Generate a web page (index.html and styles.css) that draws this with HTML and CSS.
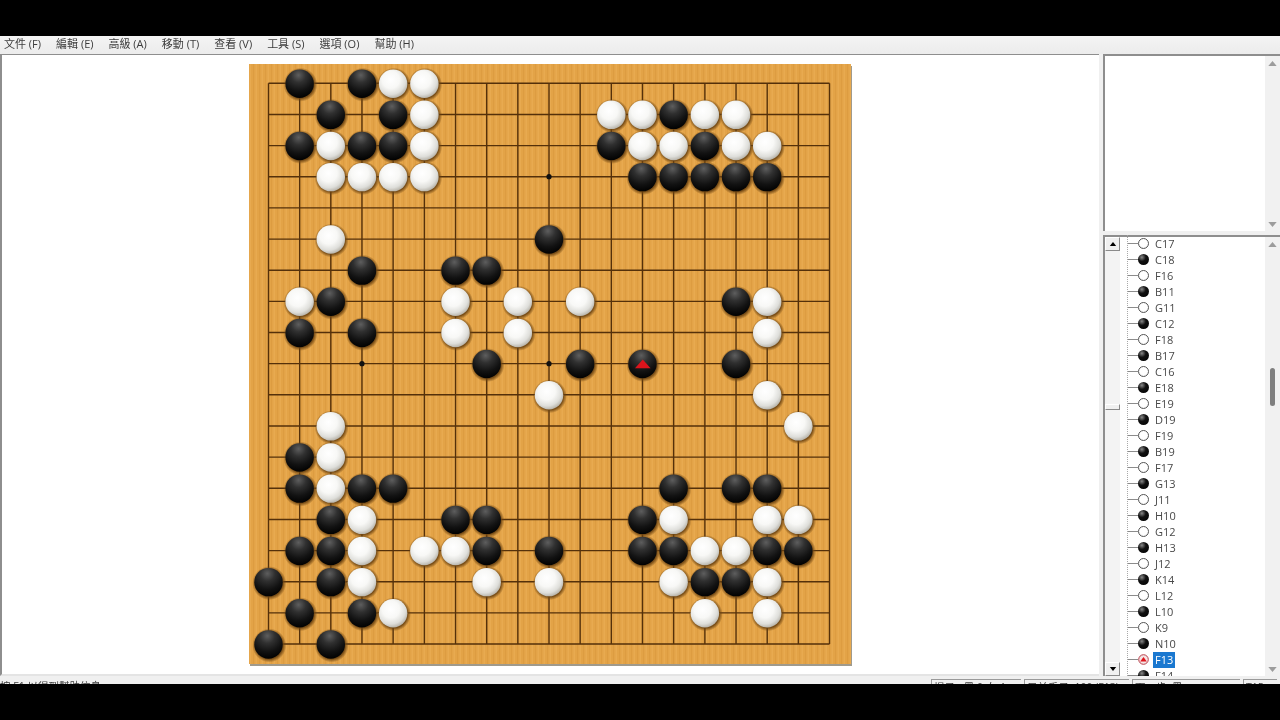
FILE: index.html
```html
<!DOCTYPE html>
<html lang="zh-Hant">
<head>
<meta charset="utf-8">
<title>圍棋</title>
<link rel="stylesheet" href="styles.css">
</head>
<body>
<div class="letterbox"></div>
<div class="window">
  <nav class="menubar">
    <span>文件 (F)</span><span>編輯 (E)</span><span>高級 (A)</span><span>移動 (T)</span><span>查看 (V)</span><span>工具 (S)</span><span>選項 (O)</span><span>幫助 (H)</span>
  </nav>
  <div class="main">
    <section class="boardpane">
      <svg class="board" viewBox="249 64 602 600" width="602" height="600">
        <defs>
          <pattern id="wood" width="6" height="10" patternUnits="userSpaceOnUse">
            <rect width="6" height="10" fill="#e3a347"/>
            <rect x="1" width="1" height="10" fill="#dd9c41"/>
            <rect x="3.5" width="1.5" height="10" fill="#e8aa50"/>
          </pattern>
          <radialGradient id="bk" cx="0.46" cy="0.2" r="0.82">
            <stop offset="0" stop-color="#5e5e5e"/>
            <stop offset="0.32" stop-color="#303030"/>
            <stop offset="0.68" stop-color="#121212"/>
            <stop offset="1" stop-color="#000"/>
          </radialGradient>
          <radialGradient id="wh" cx="0.42" cy="0.36" r="0.72">
            <stop offset="0" stop-color="#fff"/>
            <stop offset="0.42" stop-color="#f8f8f6"/>
            <stop offset="0.72" stop-color="#dededa"/>
            <stop offset="0.92" stop-color="#b4b0a6"/>
            <stop offset="1" stop-color="#8f8a7e"/>
          </radialGradient>
          <radialGradient id="halo">
            <stop offset="0.8" stop-color="#6e4512" stop-opacity=".9"/>
            <stop offset="1" stop-color="#6e4512" stop-opacity="0"/>
          </radialGradient>
          <g id="b"><circle cx="0.8" cy="1.4" r="17" fill="url(#halo)"/><circle cy="0.4" r="14.2" fill="url(#bk)"/></g>
          <g id="w"><circle cx="0.8" cy="1.4" r="17" fill="url(#halo)"/><circle cy="0.4" r="14.2" fill="url(#wh)"/></g>
        </defs>
        <rect x="249" y="64" width="602" height="600" fill="url(#wood)"/>
        <g transform="matrix(1.0018 0 0 1.00129 -0.984 0.193)">
        <path class="grid" d="M269 83V643M300.1 83V643M331.2 83V643M362.3 83V643M393.4 83V643M424.6 83V643M455.7 83V643M486.8 83V643M517.9 83V643M549 83V643M580.1 83V643M611.2 83V643M642.3 83V643M673.4 83V643M704.6 83V643M735.7 83V643M766.8 83V643M797.9 83V643M829 83V643M269 83H829M269 114.1H829M269 145.2H829M269 176.3H829M269 207.4H829M269 238.6H829M269 269.7H829M269 300.8H829M269 331.9H829M269 363H829M269 394.1H829M269 425.2H829M269 456.3H829M269 487.4H829M269 518.6H829M269 549.7H829M269 580.8H829M269 611.9H829M269 643H829"/>
        <circle cx="549" cy="176.3" r="2.6" fill="#111"/><circle cx="362.3" cy="363" r="2.6" fill="#111"/><circle cx="549" cy="363" r="2.6" fill="#111"/>
        <!-- row 0 -->
        <use href="#b" x="300.1" y="83"/><use href="#b" x="362.3" y="83"/><use href="#w" x="393.4" y="83"/><use href="#w" x="424.6" y="83"/>
        <!-- row 1 -->
        <use href="#b" x="331.2" y="114.1"/><use href="#b" x="393.4" y="114.1"/><use href="#w" x="424.6" y="114.1"/><use href="#w" x="611.2" y="114.1"/><use href="#w" x="642.3" y="114.1"/><use href="#b" x="673.4" y="114.1"/><use href="#w" x="704.6" y="114.1"/><use href="#w" x="735.7" y="114.1"/>
        <!-- row 2 -->
        <use href="#b" x="300.1" y="145.2"/><use href="#w" x="331.2" y="145.2"/><use href="#b" x="362.3" y="145.2"/><use href="#b" x="393.4" y="145.2"/><use href="#w" x="424.6" y="145.2"/><use href="#b" x="611.2" y="145.2"/><use href="#w" x="642.3" y="145.2"/><use href="#w" x="673.4" y="145.2"/><use href="#b" x="704.6" y="145.2"/><use href="#w" x="735.7" y="145.2"/><use href="#w" x="766.8" y="145.2"/>
        <!-- row 3 -->
        <use href="#w" x="331.2" y="176.3"/><use href="#w" x="362.3" y="176.3"/><use href="#w" x="393.4" y="176.3"/><use href="#w" x="424.6" y="176.3"/><use href="#b" x="642.3" y="176.3"/><use href="#b" x="673.4" y="176.3"/><use href="#b" x="704.6" y="176.3"/><use href="#b" x="735.7" y="176.3"/><use href="#b" x="766.8" y="176.3"/>
        <!-- row 5 -->
        <use href="#w" x="331.2" y="238.6"/><use href="#b" x="549" y="238.6"/>
        <!-- row 6 -->
        <use href="#b" x="362.3" y="269.7"/><use href="#b" x="455.7" y="269.7"/><use href="#b" x="486.8" y="269.7"/>
        <!-- row 7 -->
        <use href="#w" x="300.1" y="300.8"/><use href="#b" x="331.2" y="300.8"/><use href="#w" x="455.7" y="300.8"/><use href="#w" x="517.9" y="300.8"/><use href="#w" x="580.1" y="300.8"/><use href="#b" x="735.7" y="300.8"/><use href="#w" x="766.8" y="300.8"/>
        <!-- row 8 -->
        <use href="#b" x="300.1" y="331.9"/><use href="#b" x="362.3" y="331.9"/><use href="#w" x="455.7" y="331.9"/><use href="#w" x="517.9" y="331.9"/><use href="#w" x="766.8" y="331.9"/>
        <!-- row 9 -->
        <use href="#b" x="486.8" y="363"/><use href="#b" x="580.1" y="363"/><use href="#b" x="642.3" y="363"/><use href="#b" x="735.7" y="363"/>
        <polygon points="634.8,367.6 642.6,358.8 650.4,367.6" fill="#dc141c"/>
        <!-- row 10-11 -->
        <use href="#w" x="549" y="394.1"/><use href="#w" x="766.8" y="394.1"/><use href="#w" x="331.2" y="425.2"/><use href="#w" x="797.9" y="425.2"/>
        <!-- row 12 -->
        <use href="#b" x="300.1" y="456.3"/><use href="#w" x="331.2" y="456.3"/>
        <!-- row 13 -->
        <use href="#b" x="300.1" y="487.4"/><use href="#w" x="331.2" y="487.4"/><use href="#b" x="362.3" y="487.4"/><use href="#b" x="393.4" y="487.4"/><use href="#b" x="673.4" y="487.4"/><use href="#b" x="735.7" y="487.4"/><use href="#b" x="766.8" y="487.4"/>
        <!-- row 14 -->
        <use href="#b" x="331.2" y="518.6"/><use href="#w" x="362.3" y="518.6"/><use href="#b" x="455.7" y="518.6"/><use href="#b" x="486.8" y="518.6"/><use href="#b" x="642.3" y="518.6"/><use href="#w" x="673.4" y="518.6"/><use href="#w" x="766.8" y="518.6"/><use href="#w" x="797.9" y="518.6"/>
        <!-- row 15 -->
        <use href="#b" x="300.1" y="549.7"/><use href="#b" x="331.2" y="549.7"/><use href="#w" x="362.3" y="549.7"/><use href="#w" x="424.6" y="549.7"/><use href="#w" x="455.7" y="549.7"/><use href="#b" x="486.8" y="549.7"/><use href="#b" x="549" y="549.7"/><use href="#b" x="642.3" y="549.7"/><use href="#b" x="673.4" y="549.7"/><use href="#w" x="704.6" y="549.7"/><use href="#w" x="735.7" y="549.7"/><use href="#b" x="766.8" y="549.7"/><use href="#b" x="797.9" y="549.7"/>
        <!-- row 16 -->
        <use href="#b" x="269" y="580.8"/><use href="#b" x="331.2" y="580.8"/><use href="#w" x="362.3" y="580.8"/><use href="#w" x="486.8" y="580.8"/><use href="#w" x="549" y="580.8"/><use href="#w" x="673.4" y="580.8"/><use href="#b" x="704.6" y="580.8"/><use href="#b" x="735.7" y="580.8"/><use href="#w" x="766.8" y="580.8"/>
        <!-- row 17 -->
        <use href="#b" x="300.1" y="611.9"/><use href="#b" x="362.3" y="611.9"/><use href="#w" x="393.4" y="611.9"/><use href="#w" x="704.6" y="611.9"/><use href="#w" x="766.8" y="611.9"/>
        <!-- row 18 -->
        <use href="#b" x="269" y="643"/><use href="#b" x="331.2" y="643"/>
        </g>
      </svg>
    </section>
    <aside class="side">
      <div class="comment">
        <div class="comment-body"></div>
        <div class="vscroll">
          <svg class="arrow" viewBox="0 0 10 6"><path d="M0 6L5 0L10 6Z"/></svg>
          <svg class="arrow" viewBox="0 0 10 6"><path d="M0 0L10 0L5 6Z"/></svg>
        </div>
      </div>
      <div class="moves">
        <div class="slider">
          <button class="slider-btn"><svg class="tri" viewBox="0 0 8 5"><path d="M0 5L4 0L8 5Z"/></svg></button>
          <div class="slider-track"><div class="slider-thumb"></div></div>
          <button class="slider-btn"><svg class="tri" viewBox="0 0 8 5"><path d="M0 0L8 0L4 5Z"/></svg></button>
        </div>
        <ul class="tree">
          <li class="node"><i class="stone white"></i><span>C17</span></li>
          <li class="node"><i class="stone black"></i><span>C18</span></li>
          <li class="node"><i class="stone white"></i><span>F16</span></li>
          <li class="node"><i class="stone black"></i><span>B11</span></li>
          <li class="node"><i class="stone white"></i><span>G11</span></li>
          <li class="node"><i class="stone black"></i><span>C12</span></li>
          <li class="node"><i class="stone white"></i><span>F18</span></li>
          <li class="node"><i class="stone black"></i><span>B17</span></li>
          <li class="node"><i class="stone white"></i><span>C16</span></li>
          <li class="node"><i class="stone black"></i><span>E18</span></li>
          <li class="node"><i class="stone white"></i><span>E19</span></li>
          <li class="node"><i class="stone black"></i><span>D19</span></li>
          <li class="node"><i class="stone white"></i><span>F19</span></li>
          <li class="node"><i class="stone black"></i><span>B19</span></li>
          <li class="node"><i class="stone white"></i><span>F17</span></li>
          <li class="node"><i class="stone black"></i><span>G13</span></li>
          <li class="node"><i class="stone white"></i><span>J11</span></li>
          <li class="node"><i class="stone black"></i><span>H10</span></li>
          <li class="node"><i class="stone white"></i><span>G12</span></li>
          <li class="node"><i class="stone black"></i><span>H13</span></li>
          <li class="node"><i class="stone white"></i><span>J12</span></li>
          <li class="node"><i class="stone black"></i><span>K14</span></li>
          <li class="node"><i class="stone white"></i><span>L12</span></li>
          <li class="node"><i class="stone black"></i><span>L10</span></li>
          <li class="node"><i class="stone white"></i><span>K9</span></li>
          <li class="node"><i class="stone black"></i><span>N10</span></li>
          <li class="node"><svg class="stone-icon" viewBox="0 0 11 11"><circle cx="5.5" cy="5.5" r="4.8" fill="#f4e4e4" stroke="#b8404c"/><path d="M2.2 7.4L5.5 3L8.8 7.4Z" fill="#e0141c"/></svg><span class="selected">F13</span></li>
          <li class="node"><i class="stone black"></i><span>F14</span></li>
        </ul>
        <div class="vscroll">
          <svg class="arrow" viewBox="0 0 10 6"><path d="M0 6L5 0L10 6Z"/></svg>
          <div class="vthumb"></div>
          <svg class="arrow" viewBox="0 0 10 6"><path d="M0 0L10 0L5 6Z"/></svg>
        </div>
      </div>
    </aside>
  </div>
  <footer class="status">
    <div class="status-msg">按 F1 以得到幫助信息</div>
    <div class="status-cell cell-a">提子 - 黑 0 白 4</div>
    <div class="status-cell cell-b">目前手子: 100 (F13)</div>
    <div class="status-cell cell-c">下一步: 黑</div>
    <div class="status-cell cell-d">T15</div>
  </footer>
</div>
<div class="letterbox"></div>
</body>
</html>
```

FILE: styles.css
```css
* { box-sizing: border-box; }
html, body { margin: 0; height: 720px; overflow: hidden; background: #000; }
body {
  display: flex;
  flex-direction: column;
  font-family: "Open Sans", "Noto Sans CJK TC", sans-serif;
  font-size: 11px;
  color: #3c3c3c;
}
.letterbox { height: 36px; flex: none; background: #000; }
.window {
  height: 648px;
  flex: none;
  background: #f0f0f0;
  display: flex;
  flex-direction: column;
  overflow: hidden;
  filter: blur(0.45px);
}
.menubar {
  height: 18px;
  flex: none;
  display: flex;
  gap: 15px;
  padding: 0 0 2px 4px;
  align-items: center;
  line-height: 16px;
  white-space: nowrap;
  background: linear-gradient(#f4f4f4, #ececec);
}
.main { height: 622px; flex: none; display: flex; gap: 4px; }
.boardpane {
  width: 1099px;
  flex: none;
  background: #fff;
  border-top: 1px solid #8e8e8e;
  border-left: 2px solid #8e8e8e;
  border-bottom: 2px solid #e4e4e4;
  padding: 9px 0 0 247px;
}
.board { display: block; box-shadow: 1px 2px 0 #a09a8c; }
.grid { fill: none; stroke: #54300a; stroke-width: 1.4; }
.side { flex: 1; display: flex; flex-direction: column; gap: 4px; min-width: 0; }
.comment {
  height: 177px;
  flex: none;
  display: flex;
  background: #fff;
  border-top: 2px solid #8e8e8e;
  border-left: 2px solid #8e8e8e;
}
.comment-body { flex: 1; }
.vscroll {
  width: 15px;
  flex: none;
  background: #f1f1f1;
  display: flex;
  flex-direction: column;
  align-items: center;
  justify-content: space-between;
  padding: 5px 0 4px;
  position: relative;
}
.arrow { width: 9px; height: 5px; fill: #9c9c9c; display: block; }
.vthumb {
  position: absolute;
  left: 5px;
  top: 131px;
  width: 5px;
  height: 38px;
  border-radius: 3px;
  background: #7f7f7f;
}
.moves {
  flex: 1;
  min-height: 0;
  display: flex;
  background: #fff;
  border-top: 2px solid #8e8e8e;
  border-left: 2px solid #8e8e8e;
}
.slider {
  width: 15px;
  flex: none;
  display: flex;
  flex-direction: column;
  background: #f3f3f3;
}
.slider-btn {
  height: 14px;
  flex: none;
  padding: 0;
  margin: 0;
  background: #f0f0f0;
  border: 1px solid;
  border-color: #fff #8a8a8a #8a8a8a #fff;
  display: flex;
  align-items: center;
  justify-content: center;
}
.tri { width: 8px; height: 4px; fill: #000; display: block; }
.slider-track { flex: 1; position: relative; }
.slider-thumb {
  position: absolute;
  left: 0;
  top: 153px;
  width: 15px;
  height: 6px;
  background: #f0f0f0;
  border: 1px solid;
  border-color: #fff #8a8a8a #8a8a8a #fff;
}
.tree {
  flex: 1;
  min-width: 0;
  margin: -2px 0 0;
  padding: 0 0 0 7px;
  list-style: none;
  overflow: hidden;
  position: relative;
}
.tree::before {
  content: "";
  position: absolute;
  left: 7px;
  top: 0;
  bottom: 0;
  border-left: 1px dotted #a8a8a8;
}
.node {
  height: 16.04px;
  display: flex;
  align-items: center;
  font-size: 11px;
  color: #484848;
}
.node::before {
  content: "";
  width: 11px;
  flex: none;
  height: 1px;
  background: #8c8c8c;
}
.stone {
  width: 11px;
  height: 11px;
  flex: none;
  border-radius: 50%;
  margin-right: 6px;
}
.stone-icon { width: 11px; height: 11px; flex: none; margin-right: 6px; display: block; }
.stone.white { background: radial-gradient(circle at 50% 40%, #fff 55%, #ddd 100%); border: 1px solid #555; }
.stone.black { background: radial-gradient(circle at 35% 30%, #888 0, #111 38%, #000 100%); }
.selected { background: #1a78d0; color: #fff; padding: 0 2px; margin-left: -2px; line-height: 16px; }
.status {
  flex: 1;
  min-height: 0;
  display: flex;
  position: relative;
  padding-top: 3px;
  white-space: nowrap;
  overflow: hidden;
  line-height: 14px;
  font-size: 10.5px;
}
.status-msg { width: 931px; flex: none; }
.status-cell { flex: none; border-left: 1px solid #9a9a9a; border-top: 1px solid #9a9a9a; padding-left: 2px; margin-right: 3px; }
.cell-a { width: 90px; }
.cell-b { width: 105px; }
.cell-c { width: 108px; }
.cell-d { width: 34px; }
```
